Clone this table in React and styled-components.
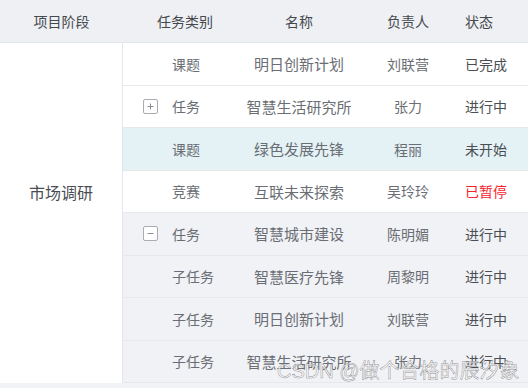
import styled, { createGlobalStyle } from 'styled-components'

const GlobalStyle = createGlobalStyle`
    html, body {
        margin: 0;
        padding: 0;
        background: #fff;
    }
    body {
        font-family: "Noto Sans CJK SC", "Noto Sans", sans-serif;
    }
`

const Page = styled.div`
    position: relative;
    width: 528px;
    height: 388px;
    overflow: hidden;
    background: #f2f3f6;
`

const Table = styled.div`
    display: grid;
    grid-template-columns: 123px 124px 104px 114px 63px;
    grid-template-rows: 43px repeat(8, 42.5px);
    background: #fff;
`

const HeadCell = styled.div`
    display: flex;
    align-items: center;
    justify-content: ${p => (p.$left ? 'flex-start' : 'center')};
    background: #eef0f4;
    border-bottom: 1px solid #e3e6eb;
    color: #45494e;
    font-size: 14px;
    box-sizing: border-box;
`

const StageCell = styled.div`
    grid-column: 1;
    grid-row: 2 / span 8;
    display: flex;
    align-items: center;
    justify-content: center;
    padding-bottom: 42px;
    box-sizing: border-box;
    border-right: 1px solid #e3e6eb;
    color: #4a4e53;
    font-size: 16px;
    background: #fff;
`

const tones = {
    plain: '#ffffff',
    hl: '#e4f2f6',
    sub: '#f1f2f6',
}

const Cell = styled.div`
    display: flex;
    align-items: center;
    justify-content: ${p => (p.$align === 'left' ? 'flex-start' : 'center')};
    padding-left: ${p => p.$pad || 0}px;
    background: ${p => tones[p.$tone]};
    border-bottom: 1px solid #e6e8ec;
    box-sizing: border-box;
    color: ${p => p.$color || '#6a6e74'};
    font-size: ${p => p.$size || 14}px;
    white-space: nowrap;
`

const Toggle = styled.span`
    width: 15px;
    height: 15px;
    box-sizing: border-box;
    border: 1px solid #a9adb3;
    border-radius: 2px;
    margin-right: 14px;
    display: inline-flex;
    align-items: center;
    justify-content: center;
    background: #fff;
`

const Watermark = styled.div`
    position: absolute;
    left: 277px;
    top: 355px;
    font-family: "Liberation Sans", "Noto Sans CJK SC", sans-serif;
    font-size: 20px;
    color: rgba(255, 255, 255, 0.75);
    -webkit-text-stroke: 0.5px rgba(100, 100, 100, 0.7);
    white-space: nowrap;
    pointer-events: none;
`

const rows = [
    { type: '课题', name: '明日创新计划', owner: '刘联营', status: '已完成', tone: 'plain' },
    { type: '任务', icon: 'plus', name: '智慧生活研究所', owner: '张力', status: '进行中', tone: 'plain' },
    { type: '课题', name: '绿色发展先锋', owner: '程丽', status: '未开始', tone: 'hl' },
    { type: '竞赛', name: '互联未来探索', owner: '吴玲玲', status: '已暂停', tone: 'plain', danger: true },
    { type: '任务', icon: 'minus', name: '智慧城市建设', owner: '陈明媚', status: '进行中', tone: 'sub' },
    { type: '子任务', name: '智慧医疗先锋', owner: '周黎明', status: '进行中', tone: 'sub' },
    { type: '子任务', name: '明日创新计划', owner: '刘联营', status: '进行中', tone: 'sub' },
    { type: '子任务', name: '智慧生活研究所', owner: '张力', status: '进行中', tone: 'sub' },
]

const ToggleIcon = ({ kind }) => (
    <Toggle>
        <svg width="9" height="9" viewBox="0 0 9 9">
            <path d="M1.5 4.5h6" stroke="#8a8e94" strokeWidth="1" />
            {kind === 'plus' && <path d="M4.5 1.5v6" stroke="#8a8e94" strokeWidth="1" />}
        </svg>
    </Toggle>
)

const App = () => {
    return (
        <Page>
            <GlobalStyle />
            <Table>
                <HeadCell>项目阶段</HeadCell>
                <HeadCell>任务类别</HeadCell>
                <HeadCell>名称</HeadCell>
                <HeadCell>负责人</HeadCell>
                <HeadCell $left>状态</HeadCell>

                <StageCell>市场调研</StageCell>

                {rows.map((r, i) => [
                    <Cell key={'t' + i} $tone={r.tone} $align="left" $pad={r.icon ? 20 : 49}>
                        {r.icon && <ToggleIcon kind={r.icon} />}
                        {r.type}
                    </Cell>,
                    <Cell key={'n' + i} $tone={r.tone} $size={15}>{r.name}</Cell>,
                    <Cell key={'o' + i} $tone={r.tone}>{r.owner}</Cell>,
                    <Cell key={'s' + i} $tone={r.tone} $align="left" $color={r.danger ? '#f5222d' : '#4a4e53'}>
                        {r.status}
                    </Cell>,
                ])}
            </Table>
            <Watermark>CSDN @做个合格的辰汐象</Watermark>
        </Page>
    )
}

export default App
